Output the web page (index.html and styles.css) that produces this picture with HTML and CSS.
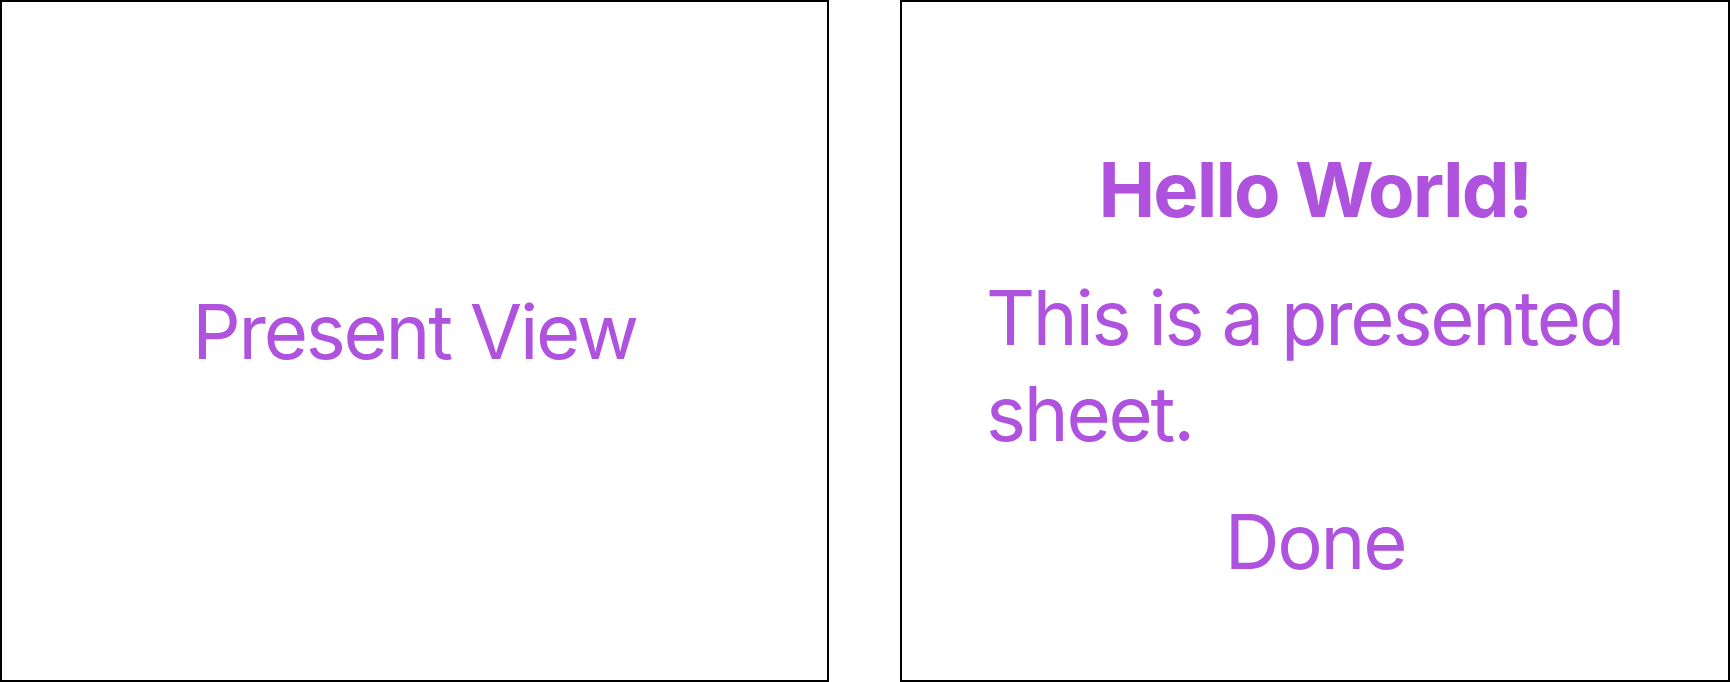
FILE: index.html
```html
<!DOCTYPE html>
<html lang="en">
<head>
  <meta charset="UTF-8" />
  <meta name="viewport" content="width=device-width, initial-scale=1.0" />
  <title>Sheet Demo</title>
  <link rel="stylesheet" href="styles.css">
</head>
<body>
  <div class="screens">
    <!-- Tela inicial -->
    <div class="screen home">
      <button class="link-btn">Present View</button>
    </div>

    <!-- Sheet apresentado -->
    <div class="screen sheet">
      <h1 class="sheet-title">Hello World!</h1>
      <p class="sheet-text">This is a presented sheet.</p>
      <button class="link-btn">Done</button>
    </div>
  </div>
</body>
</html>
```

FILE: styles.css
```css
:root {
  --purple: #af52de;
  --size: 76px;
  --line: 96px;
}

body {
  margin: 0;
  background: white;
  font-family: Inter, "Noto Sans", sans-serif;
  color: var(--purple);
}

.screens {
  display: grid;
  grid-template-columns: 829px 830px;
  column-gap: 71px;
  height: 682px;
}

.screen {
  box-sizing: border-box;
  border: 2px solid #000;
  display: flex;
  flex-direction: column;
  align-items: center;
  justify-content: center;
}

.home {
  padding-bottom: 20px;
}

.sheet {
  gap: 32px;
  padding-top: 48px;
}

.link-btn {
  background: none;
  border: none;
  padding: 0;
  margin: 0;
  font-family: inherit;
  font-size: var(--size);
  line-height: var(--line);
  letter-spacing: -0.03em;
  color: var(--purple);
  cursor: pointer;
}

.sheet-title {
  margin: 0;
  font-size: var(--size);
  font-weight: 700;
  line-height: var(--line);
  letter-spacing: -0.025em;
}

.sheet-text {
  margin: 0;
  align-self: stretch;
  padding: 0 84px;
  font-size: var(--size);
  line-height: var(--line);
  letter-spacing: -0.03em;
  text-align: left;
}
```
